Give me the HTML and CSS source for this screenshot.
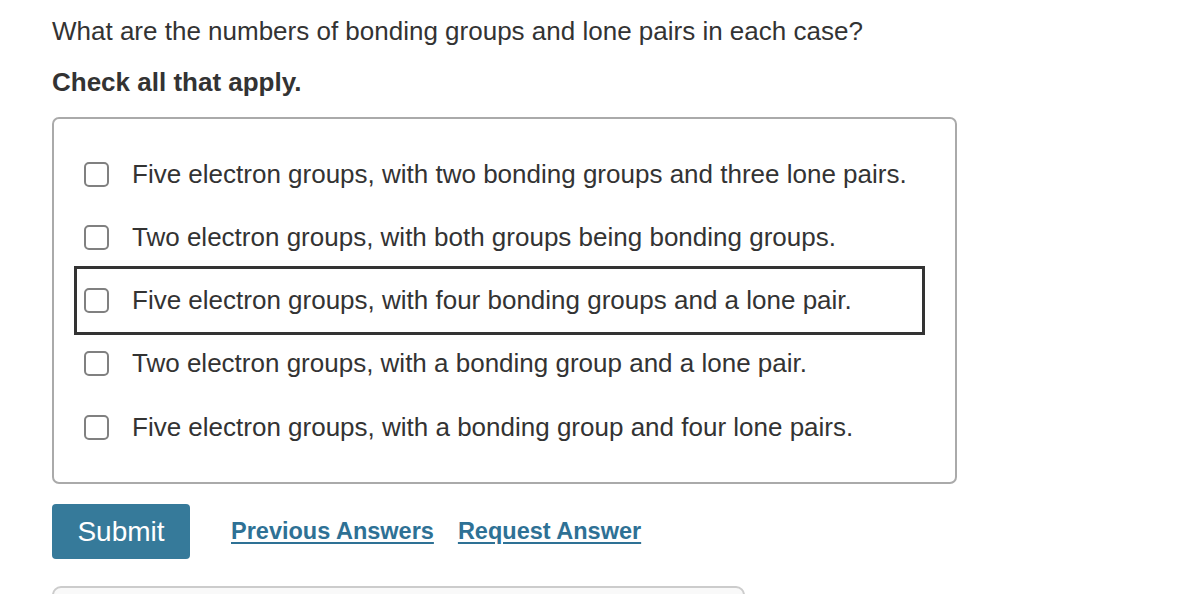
FILE: index.html
```html
<!DOCTYPE html>
<html lang="en">
  <head>
    <meta charset="UTF-8" />
    <title>Bonding groups</title>
    <link rel="stylesheet" href="styles.css">
  </head>
  <body>
    <div class="question">
      <p class="prompt">What are the numbers of bonding groups and lone pairs in each case?</p>
      <p class="instruction">Check all that apply.</p>

      <div class="choices">
        <label class="choice">
          <input type="checkbox" />
          <span class="box"></span>
          <span>Five electron groups, with two bonding groups and three lone pairs.</span>
        </label>
        <label class="choice">
          <input type="checkbox" />
          <span class="box"></span>
          <span>Two electron groups, with both groups being bonding groups.</span>
        </label>
        <label class="choice focused">
          <input type="checkbox" />
          <span class="box"></span>
          <span>Five electron groups, with four bonding groups and a lone pair.</span>
        </label>
        <label class="choice">
          <input type="checkbox" />
          <span class="box"></span>
          <span>Two electron groups, with a bonding group and a lone pair.</span>
        </label>
        <label class="choice">
          <input type="checkbox" />
          <span class="box"></span>
          <span>Five electron groups, with a bonding group and four lone pairs.</span>
        </label>
      </div>

      <div class="actions">
        <button class="submit">Submit</button>
        <a href="#" class="link">Previous Answers</a>
        <a href="#" class="link">Request Answer</a>
      </div>

      <div class="feedback"></div>
    </div>
  </body>
</html>
```

FILE: styles.css
```css
* {
  box-sizing: border-box;
}

body {
  margin: 0;
  font-family: "Liberation Sans", Arial, sans-serif;
  color: #333;
  background: #fff;
  height: 100vh;
  overflow: hidden;
}

.question {
  padding: 15px 0 0 52px;
  width: 957px;
  height: 100vh;
  overflow: hidden;
}

.prompt {
  margin: 0;
  font-size: 26px;
  line-height: 32px;
}

.instruction {
  margin: 19px 0 0;
  font-size: 26px;
  line-height: 32px;
  font-weight: bold;
}

.choices {
  margin-top: 19px;
  border: 2px solid #aaa;
  border-radius: 7px;
  padding: 23.5px 0 23.5px 23px;
  display: flex;
  flex-direction: column;
}

.choice {
  display: flex;
  align-items: center;
  gap: 23px;
  height: 63.25px;
  padding-left: 7px;
  width: 845px;
  font-size: 26px;
  cursor: pointer;
}

.choice input {
  display: none;
}

.choice.focused {
  outline: 3px solid #333;
}

.box {
  width: 25px;
  height: 25px;
  border: 2px solid #808080;
  border-radius: 5px;
  flex-shrink: 0;
}

.actions {
  display: flex;
  align-items: center;
  gap: 24px;
  margin-top: 20px;
}

.submit {
  background-color: #367a9a;
  color: #fff;
  border: none;
  border-radius: 4px;
  font-family: inherit;
  font-size: 28px;
  width: 138px;
  height: 55px;
  margin-right: 17px;
  cursor: pointer;
}

.link {
  color: #2e7195;
  font-weight: bold;
  font-size: 23.5px;
  text-decoration: underline;
  text-underline-offset: 3px;
}

.feedback {
  margin-top: 27px;
  width: 693px;
  height: 40px;
  border: 2px solid #ccc;
  border-radius: 9px;
  background: #f9f9f9;
}
```
